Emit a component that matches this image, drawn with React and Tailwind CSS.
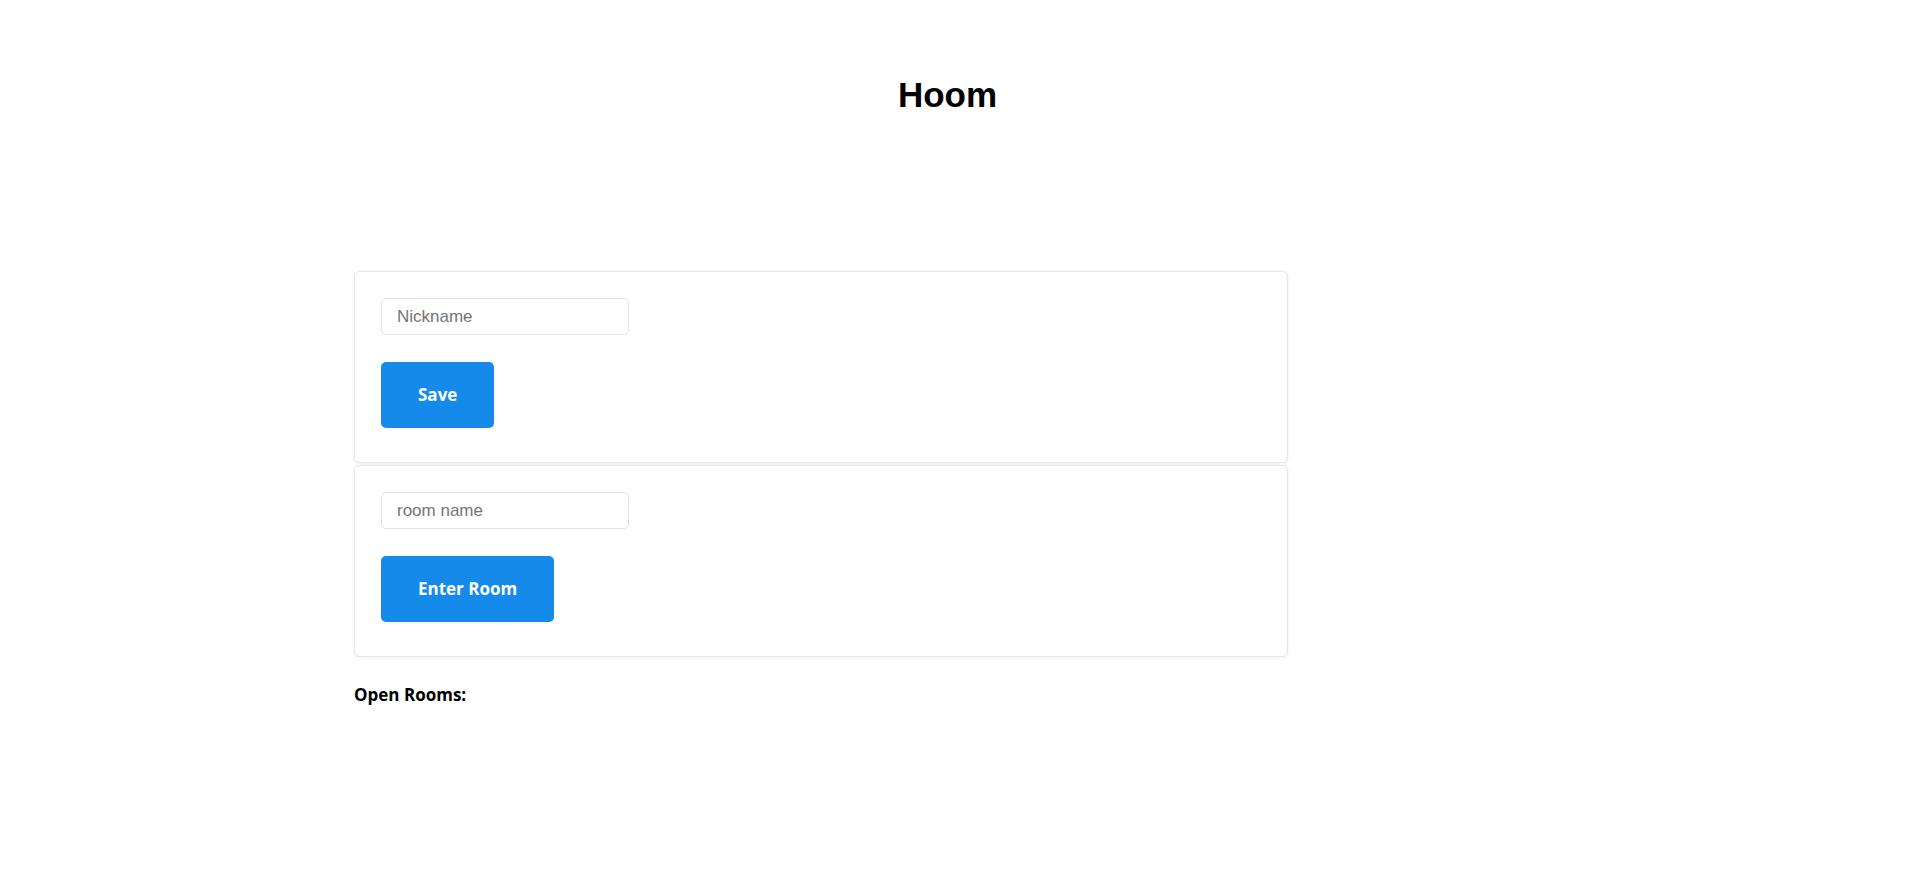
const Card = ({ placeholder, label }) => (
  <div className="border border-[#e6e6e6] rounded-[5px] shadow-[0_1px_4px_rgba(0,0,0,0.06)] pt-[26px] px-[26px] pb-[34px] bg-white">
    <input
      type="text"
      placeholder={placeholder}
      className="block w-[248px] h-[37px] border border-[#e3e3e3] rounded-[5px] px-[15px] text-[17px] font-['Liberation_Sans',Arial,sans-serif] placeholder:text-[#757575] outline-none"
    />
    <button className="mt-[27px] h-[66px] px-[37px] rounded-[5px] bg-[#158aeb] text-white text-[17px] font-bold font-['Open_Sans','Noto_Sans',sans-serif]">
      {label}
    </button>
  </div>
);

const App = () => (
  <div className="min-h-screen bg-white text-black">
    <div className="flex justify-center pr-[12px] pt-[77px]">
      <h1 className="text-[35px] leading-none font-bold font-['Liberation_Sans',Arial,sans-serif]">Hoom</h1>
    </div>
    <div className="ml-[354px] w-[934px] mt-[159px]">
      <div className="flex flex-col gap-[2px]">
        <Card placeholder="Nickname" label="Save" />
        <Card placeholder="room name" label="Enter Room" />
      </div>
      <div className="mt-[26px] text-[17px] leading-6 font-bold font-['Open_Sans','Noto_Sans',sans-serif]">Open Rooms:</div>
    </div>
  </div>
);

export default App;
